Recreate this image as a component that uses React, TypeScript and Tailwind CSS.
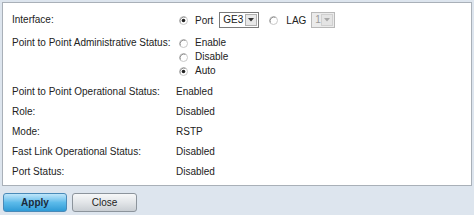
import type { ReactNode } from "react";

function Radio({ checked }: { checked?: boolean }) {
  return (
    <svg width="9" height="9" viewBox="0 0 9 9" className="shrink-0">
      <circle cx="4.5" cy="4.5" r="4" fill="#ffffff" stroke="#c8c8c8" strokeWidth="1" />
      <path d="M1.3 6.5 A4 4 0 0 1 6.5 1.3" fill="none" stroke="#8a8a8a" strokeWidth="1" />
      {checked && <circle cx="4.5" cy="4.5" r="1.8" fill="#222222" />}
    </svg>
  );
}

function Select({ value, disabled, width }: { value: string; disabled?: boolean; width: string }) {
  return (
    <div
      className={`flex h-[16px] items-center border ${width} ${
        disabled ? "border-[#b8b8b8] bg-[#ebebeb] text-[#9a9a9a]" : "border-[#7a7a7a] bg-white text-[#222]"
      }`}
    >
      <span className="flex-1 pl-[3px] leading-none">{value}</span>
      <span
        className={`mr-[1px] flex h-[12px] w-[12px] items-center justify-center border ${
          disabled ? "border-[#d0d0d0] bg-[#e4e4e4]" : "border-[#b0b0b0] bg-[#e8e8e8]"
        }`}
      >
        <svg width="6" height="4" viewBox="0 0 6 4">
          <path d="M0 0 H6 L3 3.5 Z" fill={disabled ? "#a8a8a8" : "#333"} />
        </svg>
      </span>
    </div>
  );
}

function Row({ label, children, h = "h-[20px]" }: { label: string; children: ReactNode; h?: string }) {
  return (
    <div className={`flex items-start ${h}`}>
      <div className="w-[164px] shrink-0 pt-[3px] leading-[14px]">{label}</div>
      <div className="flex-1">{children}</div>
    </div>
  );
}

export default function App() {
  const text = [
    { label: "Point to Point Operational Status:", value: "Enabled" },
    { label: "Role:", value: "Disabled" },
    { label: "Mode:", value: "RSTP" },
    { label: "Fast Link Operational Status:", value: "Disabled" },
    { label: "Port Status:", value: "Disabled" },
  ];

  return (
    <div
      className="h-[215px] w-[474px] overflow-hidden bg-[#dde5ee] pl-[2px] pt-[2px] text-[10px] text-[#222]"
      style={{ fontFamily: '"Liberation Sans", Arial, sans-serif' }}
    >
      <div className="h-[184px] w-[470px] border border-[#a9b0b8] bg-white pl-[9px] pt-[7px]">
        <Row label="Interface:" h="h-[23px]">
          <div className="flex h-[20px] items-center">
            <div className="ml-[3px] flex items-center gap-[7px]">
              <Radio checked />
              <span>Port</span>
            </div>
            <div className="ml-[6px]">
              <Select value="GE3" width="w-[40px]" />
            </div>
            <div className="ml-[10px] flex items-center gap-[8px]">
              <Radio />
              <span>LAG</span>
            </div>
            <div className="ml-[5px]">
              <Select value="1" disabled width="w-[24px]" />
            </div>
          </div>
        </Row>
        <Row label="Point to Point Administrative Status:" h="h-[49px]">
          <div className="flex flex-col pt-[3px] leading-[14px]">
            {[
              { l: "Enable", c: false },
              { l: "Disable", c: false },
              { l: "Auto", c: true },
            ].map((o) => (
              <div key={o.l} className="ml-[3px] flex h-[14px] items-center gap-[7px]">
                <Radio checked={o.c} />
                <span>{o.l}</span>
              </div>
            ))}
          </div>
        </Row>
        {text.map((r) => (
          <Row key={r.label} label={r.label}>
            <div className="pt-[3px] leading-[14px]">{r.value}</div>
          </Row>
        ))}
      </div>
      <div className="mt-[7px] flex gap-[5px] pl-[1px]">
        <button className="h-[19px] w-[64px] rounded-[3px] border border-[#4a8ab8] bg-gradient-to-b from-[#bfe6fa] via-[#5cbbea] to-[#2e9bd6] text-[10px] font-bold text-[#1a2a3a]">
          Apply
        </button>
        <button className="h-[19px] w-[65px] rounded-[3px] border border-[#8c949c] bg-gradient-to-b from-[#f7f8f9] via-[#e2e5e8] to-[#c9ced3] text-[10px] text-[#222]">
          Close
        </button>
      </div>
    </div>
  );
}
